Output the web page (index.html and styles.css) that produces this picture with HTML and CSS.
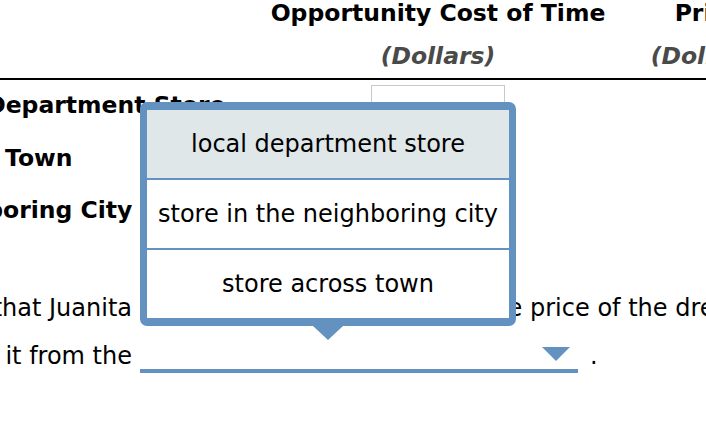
FILE: index.html
```html
<!DOCTYPE html>
<html lang="en">
<head>
<meta charset="utf-8">
<title>Opportunity Cost</title>
<link rel="stylesheet" href="styles.css">
</head>
<body>
<div class="page">
  <div class="table">
    <div class="head">
      <div class="hcell lbl"></div>
      <div class="hcell">
        <div class="t1">Opportunity Cost of Time</div>
        <div class="t2">(Dollars)</div>
      </div>
      <div class="hcell">
        <div class="t1">Price</div>
        <div class="t2">(Dollars)</div>
      </div>
    </div>
    <div class="row">
      <div class="cell lbl"><span class="ltext">Local Department Store</span></div>
      <div class="cell"><div class="inp"></div></div>
      <div class="cell"></div>
    </div>
    <div class="row">
      <div class="cell lbl"><span class="ltext">Across Town</span></div>
      <div class="cell"><div class="inp"></div></div>
      <div class="cell"></div>
    </div>
    <div class="row">
      <div class="cell lbl"><span class="ltext">Neighboring City</span></div>
      <div class="cell"><div class="inp"></div></div>
      <div class="cell"></div>
    </div>
  </div>

  <div class="para">
    <div class="pline">
      <div class="lead"><span>It is reasonable to conclude that Juanita</span></div>
      <div class="sel sel1"></div>
      <span class="tail">the price of the dress</span>
    </div>
    <div class="pline">
      <div class="lead"><span>and that she will most likely buy it from the</span></div>
      <div class="sel sel2">
        <svg class="caret" width="28" height="14" viewBox="0 0 28 14"><polygon points="0,0 28,0 14,14" fill="#6392c1"/></svg>
      </div>
      <span class="dot">.</span>
    </div>
  </div>

  <div class="popup">
    <div class="opt active">local department store</div>
    <div class="opt">store in the neighboring city</div>
    <div class="opt">store across town</div>
    <svg class="pointer" width="30" height="14" viewBox="0 0 30 14"><polygon points="0,0 30,0 15,14" fill="#6392c1"/></svg>
  </div>
</div>
</body>
</html>
```

FILE: styles.css
```css
html, body {
  margin: 0;
  padding: 0;
  overflow: hidden;
  background: #ffffff;
}

.page {
  position: relative;
  width: 706px;
  height: 434px;
  font-family: "DejaVu Sans", Verdana, sans-serif;
  font-size: 24px;
  color: #000;
}

.table {
  width: 790px;
  font-size: 23.5px;
}

.head,
.row {
  display: grid;
  grid-template-columns: 250px 376px 164px;
}

.head {
  border-bottom: 2px solid #000;
  padding-bottom: 8px;
  width: 706px;
}

.hcell {
  text-align: center;
  font-weight: bold;
  white-space: nowrap;
}

.t1 {
  line-height: 27px;
}

.t2 {
  margin-top: 16px;
  line-height: 27px;
  font-style: italic;
  color: #4a4a4a;
}

.row {
  height: 52.5px;
}

.cell {
  line-height: 50px;
  white-space: nowrap;
}

.cell.lbl {
  font-weight: bold;
}

.ltext {
  margin-left: -91px;
}

.inp {
  margin: 5px 0 0 121px;
  width: 132px;
  height: 38px;
  border: 1px solid #c9c9c9;
  background: #fff;
}

.para {
  margin-top: 46px;
}

.pline {
  display: flex;
  align-items: flex-start;
  height: 48px;
  line-height: 48px;
  white-space: nowrap;
}

.lead {
  width: 132px;
  display: flex;
  justify-content: flex-end;
  flex: none;
}

.sel {
  flex: none;
  margin-left: 8px;
  height: 37px;
  border-bottom: 4px solid #6392c1;
  box-sizing: content-box;
}

.sel1 {
  width: 335px;
  border-bottom-color: transparent;
}

.tail {
  margin-left: 8px;
}

.sel2 {
  width: 438px;
  height: 22px;
  padding-top: 15px;
  display: flex;
  justify-content: flex-end;
  align-items: flex-start;
}

.caret {
  display: block;
  margin-right: 8px;
}

.dot {
  margin-left: 12px;
}

.popup {
  position: absolute;
  left: 140px;
  top: 102px;
  width: 362px;
  border-style: solid;
  border-color: #6392c1;
  border-width: 8px 7px;
  border-radius: 7px;
  background: #fff;
}

.opt {
  height: 68px;
  line-height: 68px;
  text-align: center;
  white-space: nowrap;
  background: #fff;
}

.opt + .opt {
  border-top: 2px solid #6392c1;
}

.opt.active {
  background: #dfe7e9;
}

.pointer {
  position: absolute;
  left: 166px;
  top: calc(100% + 8px);
  display: block;
}
```
